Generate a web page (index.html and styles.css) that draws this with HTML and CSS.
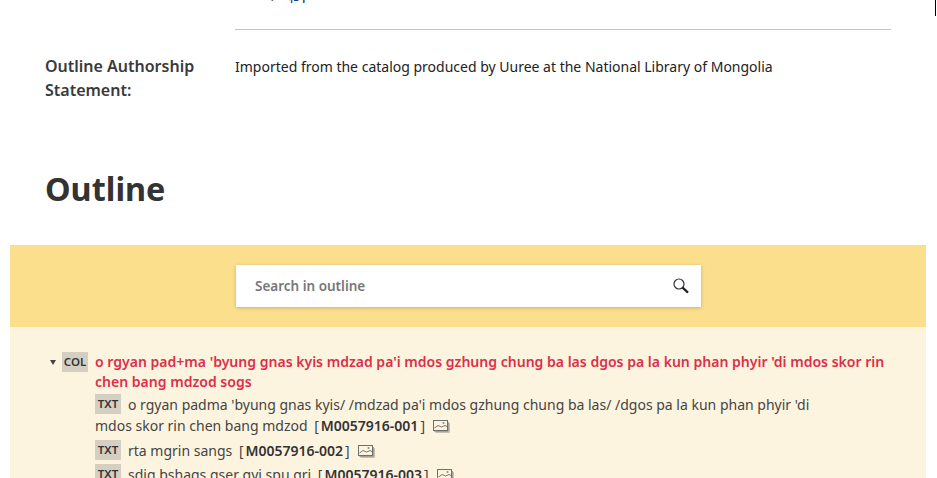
FILE: index.html
```html
<!DOCTYPE html>
<html lang="en">
<head>
<meta charset="utf-8">
<title>Outline</title>
<link rel="stylesheet" href="styles.css">
</head>
<body>
<div class="page">
  <div class="clip-top"><span class="clip-text">,<a href="#">p</a> p</span></div>
  <hr class="rule">
  <div class="field">
    <div class="label">Outline Authorship Statement:</div>
    <div class="value">Imported from the catalog produced by Uuree at the National Library of Mongolia</div>
  </div>
  <h2 class="heading">Outline</h2>
  <section class="outline">
    <div class="searchband">
      <div class="searchbox">
        <span class="placeholder">Search in outline</span>
        <svg class="searchicon" width="16" height="16" viewBox="0 0 16 16"><circle cx="6" cy="6" r="5" fill="none" stroke="#333" stroke-width="1.2"/><path d="M9.6 9.6L15 14.6" stroke="#222" stroke-width="2.2" fill="none"/></svg>
      </div>
    </div>
    <div class="tree">
      <div class="node">
        <span class="caret"></span>
        <span class="badge">COL</span>
        <span class="coltitle">o rgyan pad+ma 'byung gnas kyis mdzad pa'i mdos gzhung chung ba las dgos pa la kun phan phyir 'di mdos skor rin chen bang mdzod sogs</span>
      </div>
      <div class="txt"><span class="badge badge-txt">TXT</span>o rgyan padma 'byung gnas kyis/ /mdzad pa'i mdos gzhung chung ba las/ /dgos pa la kun phan phyir 'di mdos skor rin chen bang mdzod <span class="rid"><i>[</i><b>M0057916-001</b><i>]</i></span><svg class="scan" width="17" height="14" viewBox="0 0 17 14"><use href="#scanicon"/></svg></div>
      <div class="txt"><span class="badge badge-txt">TXT</span>rta mgrin sangs <span class="rid"><i>[</i><b>M0057916-002</b><i>]</i></span><svg class="scan" width="17" height="14" viewBox="0 0 17 14"><use href="#scanicon"/></svg></div>
      <div class="txt"><span class="badge badge-txt">TXT</span>sdig bshags gser gyi spu gri <span class="rid"><i>[</i><b>M0057916-003</b><i>]</i></span><svg class="scan" width="17" height="14" viewBox="0 0 17 14"><use href="#scanicon"/></svg></div>
    </div>
  </section>
</div>
<div class="cursor"></div>
<svg width="0" height="0" class="defs"><defs><g id="scanicon" fill="none"><path d="M2.5 12.5H16.5V3" stroke="#c4c0b4" stroke-width="1"/><path d="M1.5 11.5H15.5V2" stroke="#a5a297" stroke-width="1"/><rect x="0.5" y="0.5" width="14" height="10" fill="#fdf4e0" stroke="#6f6f6f" stroke-width="1"/><path d="M1.5 8L5 5.5L8.5 7L12 5.5L14 6.5" stroke="#777"/><circle cx="10.5" cy="3" r="1" fill="#888"/></g></defs></svg>
</body>
</html>
```
FILE: styles.css
```css
html, body { margin: 0; padding: 0; height: 478px; overflow: hidden; background: #fff; }
body { font-family: "Noto Sans", sans-serif; color: #333; position: relative; }
.page { padding: 0 11px 0 10px; }
.clip-top { height: 4px; margin-left: 225px; overflow: hidden; font-size: 14px; }
.clip-text { display: block; margin-top: -16px; padding-left: 36px; line-height: 20px; color: #222; }
.clip-text a { color: #23408f; margin-left: 15px; }
.rule { margin: 25px 35px 0 225px; border: 0; border-top: 1px solid #c4c4c4; height: 0; }
.field { display: flex; margin: 25px 0 0 35px; }
.label { width: 190px; font-size: 16px; font-weight: 600; line-height: 24px; color: #3a3a3a; margin-top: -1px; }
.value { font-size: 14px; line-height: 24px; color: #222; }
.heading { margin: 64px 0 0 35px; font-size: 32.4px; line-height: 44px; font-weight: 700; color: #333; }
.outline { margin-top: 35px; }
.searchband { background: #fcdf8d; height: 82px; padding-top: 20px; box-sizing: border-box; display: flex; justify-content: center; }
.searchbox { width: 465px; height: 42px; background: #fff; box-shadow: 0 1px 4px rgba(0,0,0,.2); display: flex; align-items: center; justify-content: space-between; padding: 0 12px 0 19px; box-sizing: border-box; margin-right: -1px; }
.placeholder { font-size: 13.5px; font-weight: 600; color: #777; }
.searchicon { display: block; }
.tree { background: #fdf4e0; padding: 25px 30px 0 39px; height: 151px; box-sizing: border-box; overflow: hidden; }
.node { position: relative; padding-left: 46px; font-size: 14.04px; line-height: 20px; margin-bottom: 2px; }
.caret { position: absolute; left: 1px; top: 8px; border-left: 3.5px solid transparent; border-right: 3.5px solid transparent; border-top: 5px solid #444; }
.badge { position: absolute; left: 13px; top: 0; background: #d4cfc1; color: #333; font-size: 11.5px; font-weight: 600; line-height: 20px; width: 26px; text-align: center; }
.coltitle { color: #dc2f49; font-weight: 600; }
.txt { margin-left: 46px; max-width: 730px; font-size: 14px; line-height: 21px; color: #444; margin-bottom: 3.5px; }
.badge-txt { position: static; display: inline-block; margin-right: 7px; line-height: 20px; vertical-align: top; }
.rid { margin-left: 3px; }
.rid i { font-style: normal; }
.rid b { font-weight: 600; margin: 0 2px; color: #333; }
.scan { margin-left: 8px; vertical-align: -3px; }
.cursor { position: absolute; left: 935px; top: 0; width: 1px; height: 16px; background: #000; }
.defs { position: absolute; }
```
